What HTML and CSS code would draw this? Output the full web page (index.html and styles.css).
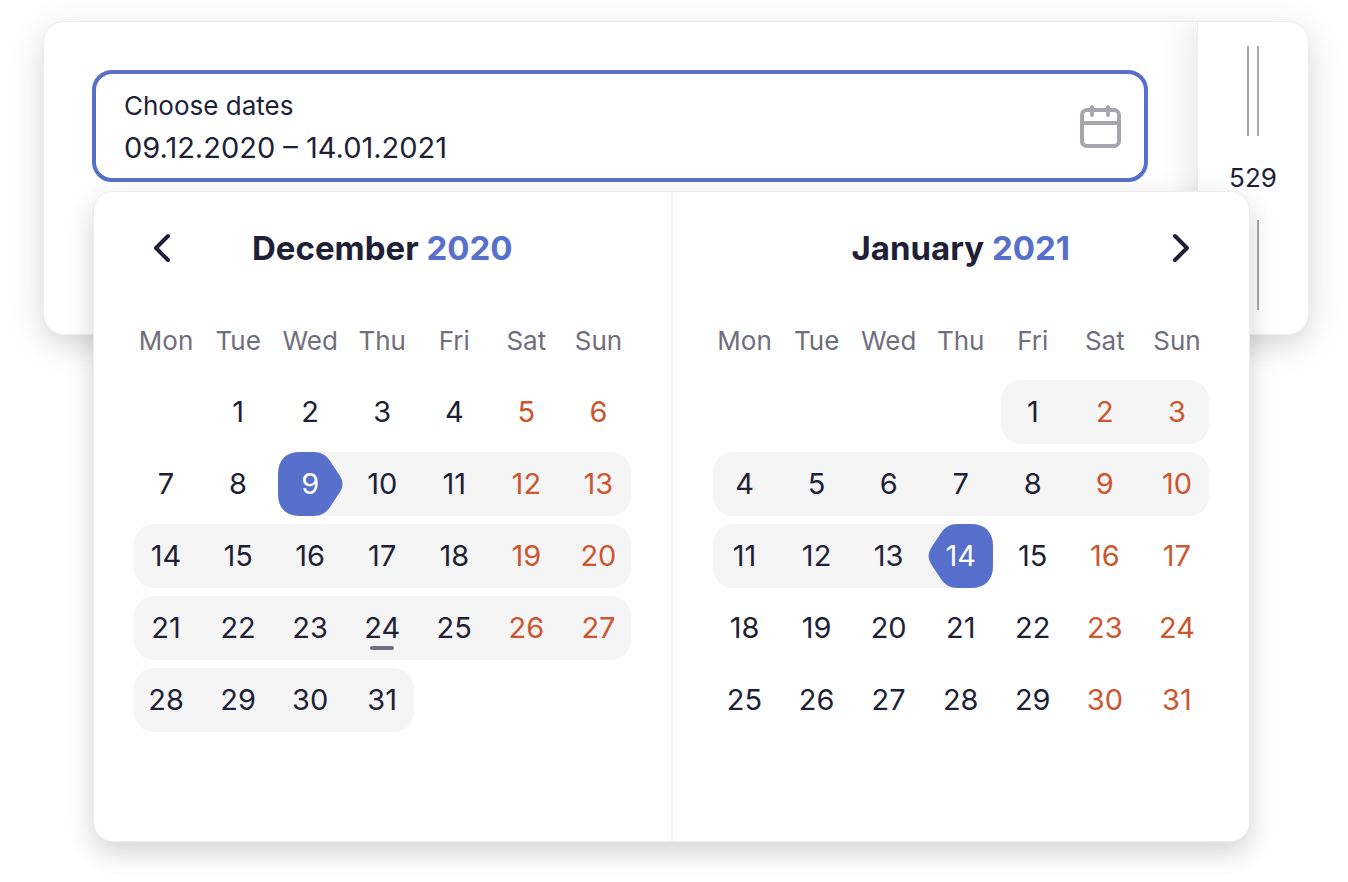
FILE: index.html
```html
<!DOCTYPE html>
<html lang="en">
<head>
<meta charset="utf-8">
<title>Choose dates</title>
<link rel="stylesheet" href="styles.css">
</head>
<body>
<main class="card">
  <section class="card-main">
    <div class="picker">
      <div class="field">
        <div class="field-text">
          <label class="field-label" for="dates">Choose dates</label>
          <input class="field-input" id="dates" type="text" value="09.12.2020 – 14.01.2021" readonly>
        </div>
        <button class="icon-button" type="button" aria-label="Toggle calendar">
          <svg width="42" height="46" viewBox="0 0 42 46" fill="none" stroke="currentColor" stroke-width="4" stroke-linecap="round">
            <rect x="2" y="7" width="37" height="36" rx="5"/>
            <path d="M2 20H39" stroke-linecap="butt"/>
            <path d="M12 4V12M28 4V12"/>
          </svg>
        </button>
      </div>
      <div class="popup">
        <section class="month">
          <header class="month-head">
            <button class="nav-button" type="button" aria-label="Previous month">
              <svg width="20" height="32" viewBox="0 0 20 32"><path d="M16 4L4 16L16 28"/></svg>
            </button>
            <h2 class="month-title">December <span class="year">2020</span></h2>
            <span class="nav-space"></span>
          </header>
          <table class="days">
            <thead><tr><th>Mon</th><th>Tue</th><th>Wed</th><th>Thu</th><th>Fri</th><th>Sat</th><th>Sun</th></tr></thead>
            <tbody>
              <tr><td></td><td><button>1</button></td><td><button>2</button></td><td><button>3</button></td><td><button>4</button></td><td class="off"><button>5</button></td><td class="off"><button>6</button></td></tr>
              <tr><td><button>7</button></td><td><button>8</button></td><td class="pick-from"><button><svg class="marker" width="65" height="64" viewBox="0 0 65 64"><path d="M22 0H35C43 0 48 3 52 9L62 24Q67 32 62 40L52 55C48 61 43 64 35 64H22C8 64 0 56 0 42V22C0 8 8 0 22 0Z"/></svg><span>9</span></button></td><td class="in"><button>10</button></td><td class="in"><button>11</button></td><td class="in off"><button>12</button></td><td class="in end off"><button>13</button></td></tr>
              <tr><td class="in start"><button>14</button></td><td class="in"><button>15</button></td><td class="in"><button>16</button></td><td class="in"><button>17</button></td><td class="in"><button>18</button></td><td class="in off"><button>19</button></td><td class="in end off"><button>20</button></td></tr>
              <tr><td class="in start"><button>21</button></td><td class="in"><button>22</button></td><td class="in"><button>23</button></td><td class="in"><button class="today">24</button></td><td class="in"><button>25</button></td><td class="in off"><button>26</button></td><td class="in end off"><button>27</button></td></tr>
              <tr><td class="in start"><button>28</button></td><td class="in"><button>29</button></td><td class="in"><button>30</button></td><td class="in end"><button>31</button></td><td></td><td></td><td></td></tr>
            </tbody>
          </table>
        </section>
        <section class="month">
          <header class="month-head">
            <span class="nav-space"></span>
            <h2 class="month-title">January <span class="year">2021</span></h2>
            <button class="nav-button" type="button" aria-label="Next month">
              <svg width="20" height="32" viewBox="0 0 20 32"><path d="M4 4L16 16L4 28"/></svg>
            </button>
          </header>
          <table class="days">
            <thead><tr><th>Mon</th><th>Tue</th><th>Wed</th><th>Thu</th><th>Fri</th><th>Sat</th><th>Sun</th></tr></thead>
            <tbody>
              <tr><td></td><td></td><td></td><td></td><td class="in start"><button>1</button></td><td class="in off"><button>2</button></td><td class="in end off"><button>3</button></td></tr>
              <tr><td class="in start"><button>4</button></td><td class="in"><button>5</button></td><td class="in"><button>6</button></td><td class="in"><button>7</button></td><td class="in"><button>8</button></td><td class="in off"><button>9</button></td><td class="in end off"><button>10</button></td></tr>
              <tr><td class="in start"><button>11</button></td><td class="in"><button>12</button></td><td class="in"><button>13</button></td><td class="pick-to"><button><svg class="marker" width="65" height="64" viewBox="0 0 65 64"><path d="M43 0H30C22 0 17 3 13 9L3 24Q-2 32 3 40L13 55C17 61 22 64 30 64H43C57 64 65 56 65 42V22C65 8 57 0 43 0Z"/></svg><span>14</span></button></td><td><button>15</button></td><td class="off"><button>16</button></td><td class="off"><button>17</button></td></tr>
              <tr><td><button>18</button></td><td><button>19</button></td><td><button>20</button></td><td><button>21</button></td><td><button>22</button></td><td class="off"><button>23</button></td><td class="off"><button>24</button></td></tr>
              <tr><td><button>25</button></td><td><button>26</button></td><td><button>27</button></td><td><button>28</button></td><td><button>29</button></td><td class="off"><button>30</button></td><td class="off"><button>31</button></td></tr>
            </tbody>
          </table>
        </section>
      </div>
    </div>
  </section>
  <aside class="stub">
    <div class="rails"></div>
    <div class="stub-number">529</div>
    <div class="rails"></div>
  </aside>
</main>
</body>
</html>
```
FILE: styles.css
```css
* {
  box-sizing: border-box;
}

:root {
  --ink: #211f38;
  --blue: #5670cb;
  --muted: #706e7c;
  --orange: #cb5630;
  --range: #f5f5f6;
  --line: #ededed;
}

body {
  min-height: 100vh;
  margin: 0;
  padding: 22px 40px 40px 44px;
  background: #fff;
  color: var(--ink);
  font-family: Inter, "Open Sans", sans-serif;
}

button {
  padding: 0;
  border: 0;
  background: none;
  color: inherit;
  font: inherit;
  cursor: pointer;
}

.card {
  display: flex;
  border-radius: 20px;
  background: #fff;
  box-shadow: 0 0 0 1px var(--line), 0 8px 40px rgba(0, 0, 0, 0.1), 0 12px 24px rgba(0, 0, 0, 0.08);
}

.card-main {
  flex: 1;
  min-width: 0;
  padding: 48px 50px 0 48px;
}

.picker {
  position: relative;
}

.field {
  display: flex;
  align-items: center;
  justify-content: space-between;
  height: 112px;
  padding: 0 22px 0 28px;
  border: 4px solid var(--blue);
  border-radius: 20px;
  background: #fff;
}

.field-text {
  display: flex;
  flex: 1;
  flex-direction: column;
  padding-top: 2px;
}

.field-label {
  font-size: 26px;
  line-height: 40px;
}

.field-input {
  width: 100%;
  height: 42px;
  padding: 0;
  border: 0;
  outline: 0;
  background: none;
  color: inherit;
  font: inherit;
  font-size: 29px;
}

.icon-button {
  display: flex;
  color: #a7a6ae;
}

.stub {
  display: flex;
  flex-direction: column;
  align-items: center;
  width: 110px;
  padding: 24px 0;
  border-radius: 0 20px 20px 0;
  background: #fff;
  box-shadow: -1px 0 0 var(--line), -8px 0 32px rgba(0, 0, 0, 0.1);
  clip-path: inset(0 0 0 -60px round 0 20px 20px 0);
}

.rails {
  width: 12px;
  height: 90px;
  border: solid #a8a8a8;
  border-width: 0 2px;
}

.stub-number {
  font-size: 26px;
  line-height: 84px;
}

.popup {
  position: absolute;
  z-index: 1;
  top: calc(100% + 9px);
  left: 1px;
  right: -102px;
  display: flex;
  border: 1px solid var(--line);
  border-radius: 20px;
  background: #fff;
  box-shadow: 0 8px 32px rgba(0, 0, 0, 0.08), 0 12px 24px rgba(0, 0, 0, 0.1);
}

.month {
  flex: 1;
  padding: 24px 36px 101px;
}

.month + .month {
  border-left: 2px solid #f4f4f4;
}

.month-head {
  display: flex;
  align-items: center;
  justify-content: space-between;
  height: 64px;
  margin-bottom: 22px;
}

.month-title {
  margin: 0;
  font-size: 33px;
  font-weight: 700;
  line-height: 48px;
}

.year {
  color: var(--blue);
}

.nav-button,
.nav-space {
  width: 64px;
  height: 64px;
}

.nav-button {
  display: grid;
  place-items: center;
}

.nav-button path {
  fill: none;
  stroke: var(--ink);
  stroke-width: 4;
  stroke-linecap: round;
  stroke-linejoin: round;
}

.days {
  width: 100%;
  border-collapse: separate;
  border-spacing: 0 8px;
  table-layout: fixed;
}

.days th {
  height: 62px;
  padding: 0 0 2px;
  color: var(--muted);
  font-size: 26px;
  font-weight: 400;
}

.days td {
  height: 64px;
  padding: 0;
  font-size: 29px;
  text-align: center;
}

.days button {
  position: relative;
  display: block;
  width: 64px;
  height: 64px;
  margin: 0 auto;
  padding-bottom: 2px;
}

.days .in {
  background-color: var(--range);
  background-clip: padding-box;
}

.days .start {
  padding-right: 4px;
  border-left: 4px solid transparent;
  border-radius: 24px 0 0 24px / 20px 0 0 20px;
}

.days .end {
  padding-left: 4px;
  border-right: 4px solid transparent;
  border-radius: 0 24px 24px 0 / 0 20px 20px 0;
}

.days .off {
  color: var(--orange);
}

.days .pick-from {
  background: linear-gradient(to right, transparent 50%, var(--range) 50%);
  color: #fff;
}

.days .pick-to {
  background: linear-gradient(to left, transparent 50%, var(--range) 50%);
  color: #fff;
}

.marker {
  position: absolute;
  top: 0;
  left: 0;
  fill: var(--blue);
}

.pick-to .marker {
  right: 0;
  left: auto;
}

.marker + span {
  position: relative;
}

.today::after {
  content: "";
  position: absolute;
  bottom: 10px;
  left: 20px;
  width: 24px;
  height: 4px;
  border-radius: 2px;
  background: var(--muted);
}
```
